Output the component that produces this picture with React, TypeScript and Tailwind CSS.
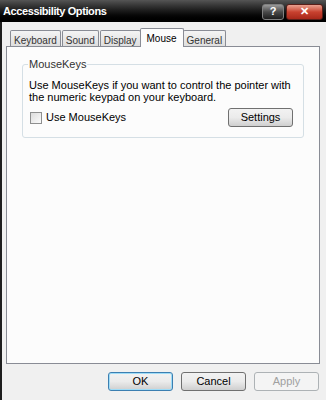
import React from "react";

const font = { fontFamily: '"Liberation Sans", Arial, sans-serif' };

function Tab({ label, selected }: { label: string; selected?: boolean }) {
  if (selected) {
    return (
      <div className="relative z-10 -mx-[2px] -mb-px flex h-[19px] items-start rounded-t-[2px] border border-b-0 border-[#898c95] bg-[#fcfcfc] px-[6px] pt-[2px] text-[10px] text-black">
        {label}
      </div>
    );
  }
  return (
    <div className="flex h-[16px] items-start rounded-t-[2px] border border-b-0 border-[#898c95] bg-gradient-to-b from-[#f4f4f4] to-[#dedede] px-[3px] pt-[2px] text-[10px] text-[#333]">
      {label}
    </div>
  );
}

function Button({ label, variant }: { label: string; variant?: "default" | "disabled" }) {
  const base =
    "flex h-[19px] w-[65px] items-center justify-center rounded-[3px] border text-[11px]";
  if (variant === "default") {
    return (
      <div className={base + " border-[#3c7fb1] bg-gradient-to-b from-[#f2f2f2] via-[#ebebeb] to-[#cfcfcf] text-black shadow-[inset_0_0_0_1px_#9fdcf7]"}>
        {label}
      </div>
    );
  }
  if (variant === "disabled") {
    return (
      <div className={base + " border-[#adb2b5] bg-[#f4f4f4] text-[#a0a0a0]"}>{label}</div>
    );
  }
  return (
    <div className={base + " border-[#707070] bg-gradient-to-b from-[#f2f2f2] via-[#ebebeb] to-[#cfcfcf] text-black"}>
      {label}
    </div>
  );
}

export default function App() {
  return (
    <div className="flex h-[400px] w-[326px] flex-col overflow-hidden bg-[#f0f0f0]" style={font}>
      {/* Title bar */}
      <div className="flex h-[22px] shrink-0 items-center justify-between bg-gradient-to-b from-[#555] via-[#1a1a1a] to-[#000] pl-[3px] pr-[3px]">
        <span className="text-[11px] font-bold tracking-[-0.4px] text-white">Accessibility Options</span>
        <div className="flex items-center gap-[2px] pt-[1px]">
          <div className="flex h-[16px] w-[22px] items-center justify-center rounded-[3px] border border-[#808080] bg-gradient-to-b from-[#9a9a9a] via-[#4a4a4a] to-[#1e1e1e] text-[11px] font-bold text-white">
            ?
          </div>
          <div className="flex h-[16px] w-[37px] items-center justify-center rounded-[3px] border border-[#5a1e18] bg-gradient-to-b from-[#e8a090] via-[#c8412f] to-[#a8281a] text-[11px] font-bold text-white">
            ✕
          </div>
        </div>
      </div>

      <div className="flex flex-1">
        <div className="w-[2px] bg-[#1e1e1e]" />
        <div className="flex flex-1 flex-col pl-[4px] pr-[6px]">
          {/* Tabs */}
          <div className="mt-[6px] flex items-end gap-[1px] pl-[4px]">
            <Tab label="Keyboard" />
            <Tab label="Sound" />
            <Tab label="Display" />
            <Tab label="Mouse" selected />
            <Tab label="General" />
          </div>
          {/* Page */}
          <div className="h-[318px] border border-[#898c95] bg-[#fcfcfc] px-[15px] pt-[17px]">
            <div className="relative rounded-[3px] border border-[#d5dfe5] px-[6px] pb-[10px] pt-[14px]">
              <span className="absolute -top-[7px] left-[5px] bg-[#fcfcfc] px-[1px] text-[11px] leading-[13px] text-[#333]">
                MouseKeys
              </span>
              <p className="text-[11px] leading-[12px] text-black">
                Use MouseKeys if you want to control the pointer with the numeric keypad on your keyboard.
              </p>
              <div className="mt-[5px] flex items-center justify-between">
                <div className="flex items-center gap-[4px] pl-[1px]">
                  <div className="h-[12px] w-[12px] border border-[#8e8f8f] bg-gradient-to-br from-[#dcdcdc] to-[#fbfbfb]" />
                  <span className="text-[11px] text-black">Use MouseKeys</span>
                </div>
                <div className="mr-[4px]">
                  <Button label="Settings" />
                </div>
              </div>
            </div>
          </div>
          {/* Buttons */}
          <div className="mt-[8px] flex justify-end gap-[8px] pr-[1px]">
            <Button label="OK" variant="default" />
            <Button label="Cancel" />
            <Button label="Apply" variant="disabled" />
          </div>
        </div>
      </div>
    </div>
  );
}
